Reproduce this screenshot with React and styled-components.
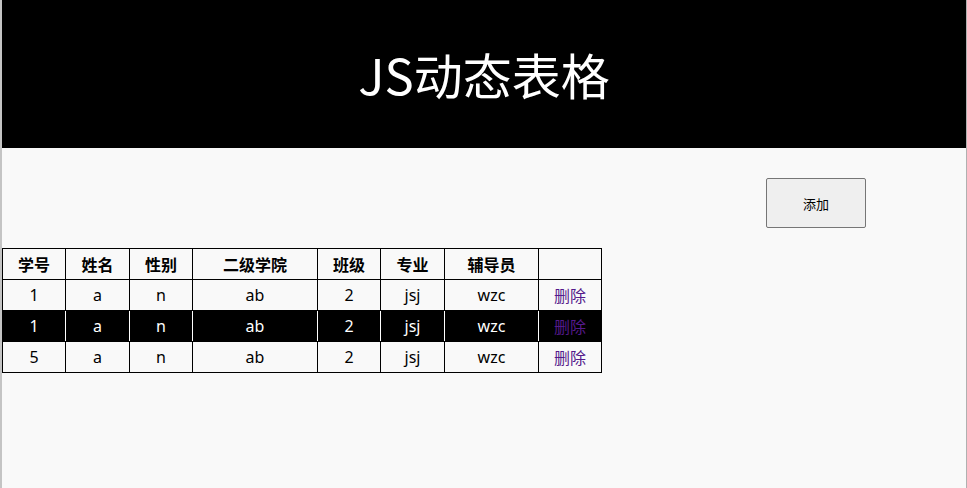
import * as React from "react";
import styled, { createGlobalStyle } from "styled-components";

const rows = [
  { id: 1, name: "a", sex: "n", college: "ab", klass: 2, major: "jsj", tutor: "wzc" },
  { id: 1, name: "a", sex: "n", college: "ab", klass: 2, major: "jsj", tutor: "wzc", dark: true },
  { id: 5, name: "a", sex: "n", college: "ab", klass: 2, major: "jsj", tutor: "wzc" },
];

const headers = ["学号", "姓名", "性别", "二级学院", "班级", "专业", "辅导员", ""];
const widths = [63, 64, 63, 125, 63, 64, 94, 63];

const GlobalStyle = createGlobalStyle`
  html, body {
    margin: 0;
    padding: 0;
    background: #f9f9f9;
  }
  body {
    font-family: "Noto Sans", "Noto Sans CJK SC", sans-serif;
  }
`;

const App = () => {
  return (
    <Page>
      <GlobalStyle />
      <Header>
        <Title>JS动态表格</Title>
      </Header>
      <Toolbar>
        <AddButton>添加</AddButton>
      </Toolbar>
      <Table>
        <colgroup>
          {widths.map((w, i) => <col key={i} style={{ width: w }} />)}
        </colgroup>
        <thead>
          <tr>
            {headers.map((h, i) => <Th key={i}>{h}</Th>)}
          </tr>
        </thead>
        <tbody>
          {rows.map((r, i) => (
            <Row key={i} $dark={r.dark}>
              <Td $dark={r.dark}>{r.id}</Td>
              <Td $dark={r.dark}>{r.name}</Td>
              <Td $dark={r.dark}>{r.sex}</Td>
              <Td $dark={r.dark}>{r.college}</Td>
              <Td $dark={r.dark}>{r.klass}</Td>
              <Td $dark={r.dark}>{r.major}</Td>
              <Td $dark={r.dark}>{r.tutor}</Td>
              <Td $dark={r.dark}><DeleteLink href="#">删除</DeleteLink></Td>
            </Row>
          ))}
        </tbody>
      </Table>
    </Page>
  );
};

const Page = styled.div`
  height: 488px;
  box-sizing: border-box;
  border-left: 2px solid #c4c4c4;
  border-right: 1px solid #b0b0b0;
  background: #f9f9f9;
`;

const Header = styled.div`
  height: 148px;
  background: #000;
  display: flex;
  align-items: center;
  justify-content: center;
`;

const Title = styled.h1`
  margin: 0;
  color: #fff;
  font-family: "Noto Sans CJK SC", sans-serif;
  font-weight: 400;
  font-size: 49px;
  line-height: 1;
  padding-bottom: 2px;
`;

const Toolbar = styled.div`
  display: flex;
  justify-content: flex-end;
  padding: 30px 100px 0 0;
  margin-bottom: 20px;
`;

const AddButton = styled.button`
  width: 100px;
  height: 50px;
  border: 1px solid #767676;
  border-radius: 2px;
  background: #efefef;
  color: #000;
  font-family: "Noto Sans CJK SC", sans-serif;
  font-size: 13px;
  cursor: pointer;
`;

const Table = styled.table`
  border-collapse: collapse;
  table-layout: fixed;
  width: 600px;
  text-align: center;
  font-size: 16px;
`;

const Th = styled.th`
  border: 1px solid #000;
  height: 30px;
  padding: 0;
  font-family: "Noto Sans CJK SC", sans-serif;
  font-size: 16px;
  font-weight: 700;
  color: #000;
`;

const Row = styled.tr`
  background: ${({ $dark }) => ($dark ? "#000" : "transparent")};
  color: ${({ $dark }) => ($dark ? "#fff" : "#000")};
`;

const Td = styled.td`
  border: 1px solid #000;
  height: 30px;
  padding: 0;
  ${({ $dark }) => $dark && `
    border-left-color: #fff;
    border-right-color: #fff;
    &:first-child { border-left-color: #000; }
    &:last-child { border-right-color: #000; }
  `}
`;

const DeleteLink = styled.a`
  color: #551a8b;
  text-decoration: none;
  font-family: "Noto Sans CJK SC", sans-serif;
  font-size: 16px;
`;

export default App;
